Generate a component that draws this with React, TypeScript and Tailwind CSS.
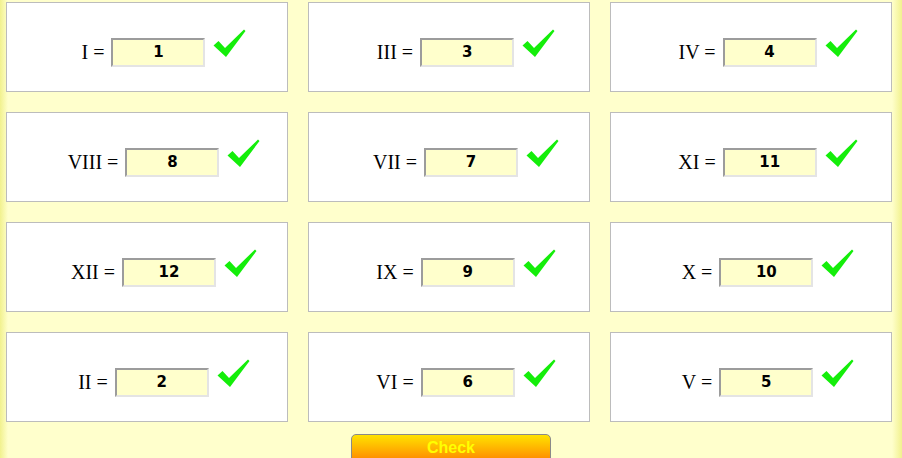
const rows: [string, string][] = [
  ["I", "1"],
  ["III", "3"],
  ["IV", "4"],
  ["VIII", "8"],
  ["VII", "7"],
  ["XI", "11"],
  ["XII", "12"],
  ["IX", "9"],
  ["X", "10"],
  ["II", "2"],
  ["VI", "6"],
  ["V", "5"],
];

function Tick() {
  return (
    <svg
      width="33"
      height="29"
      viewBox="0 0 33 29"
      className="absolute left-[102px] top-[-9px]"
    >
      <path d="M0.5 16.5 L5.5 12 L12 19 L31 0.5 L32.5 2 L13 28 Z" fill="#14ee0a" />
    </svg>
  );
}

function Card({ numeral, value }: { numeral: string; value: string }) {
  return (
    <div className="flex h-[90px] items-center justify-center border border-[#bcbcbc] bg-white pt-[10px] pr-[7px]">
      <span className="text-[20px] text-black [font-family:'Liberation_Serif',serif]">
        {numeral} =
      </span>
      <div className="relative ml-[7px]">
        <input
          readOnly
          value={value}
          className="block h-[29px] w-[94px] border-2 border-t-[#9c9c9c] border-l-[#9c9c9c] border-b-[#e4e4e4] border-r-[#e4e4e4] bg-[#ffffcc] text-center text-[15px] font-bold text-black outline-none [font-family:'DejaVu_Sans',sans-serif]"
        />
        <Tick />
      </div>
    </div>
  );
}

export default function App() {
  return (
    <div className="flex h-[458px] w-full flex-col overflow-hidden bg-[linear-gradient(to_right,#f1f18e_0px,#ffffcc_8px,#ffffcc_892px,#f1f18e_902px)]">
      <div className="grid grid-cols-[282px_282px_282px] gap-[20px] pl-[6px] pt-[2px]">
        {rows.map(([n, v]) => (
          <Card key={n} numeral={n} value={v} />
        ))}
      </div>
      <button
        type="button"
        className="mx-auto mt-[12px] h-[30px] w-[200px] shrink-0 rounded-[5px] border border-[#8a8a8a] bg-gradient-to-b from-[#ffe200] to-[#ff7e00] pb-[2px] text-[16px] font-bold leading-[18px] text-[#ffff00] [font-family:'Liberation_Sans',Arial,sans-serif]"
      >
        Check
      </button>
    </div>
  );
}
